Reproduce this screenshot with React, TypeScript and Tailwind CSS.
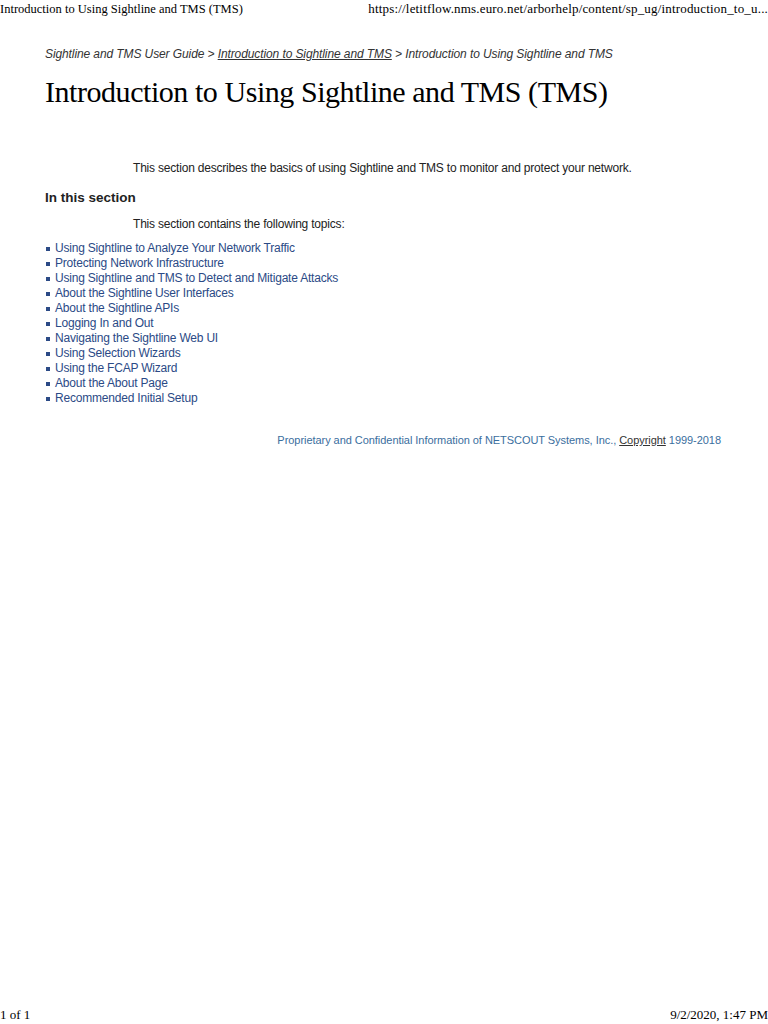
const TOPICS = [
  "Using Sightline to Analyze Your Network Traffic",
  "Protecting Network Infrastructure",
  "Using Sightline and TMS to Detect and Mitigate Attacks",
  "About the Sightline User Interfaces",
  "About the Sightline APIs",
  "Logging In and Out",
  "Navigating the Sightline Web UI",
  "Using Selection Wizards",
  "Using the FCAP Wizard",
  "About the About Page",
  "Recommended Initial Setup"
];

const serif = "font-['Liberation_Serif',serif]";
const sans = "font-['Liberation_Sans',Arial,sans-serif]";

export default function App() {
  return (
    <div className="flex min-h-[1024px] w-[768px] flex-col bg-white text-black">
      <div className={`flex items-start justify-between pt-[1px] leading-[16px] ${serif}`}>
        <span className="text-[12.5px]">Introduction to Using Sightline and TMS (TMS)</span>
        <span className="text-[13px] tracking-[0.18px]">
          https://letitflow.nms.euro.net/arborhelp/content/sp_ug/introduction_to_u...
        </span>
      </div>

      <div className={`flex flex-1 flex-col pl-[45px] pr-[47px] ${sans}`}>
        <p className="mt-[29px] text-[12px] italic leading-[16px] tracking-[-0.1px] text-[#333]">
          Sightline and TMS User Guide &gt; <span className="underline">Introduction to Sightline and TMS</span> &gt;
          Introduction to Using Sightline and TMS
        </p>
        <h1 className={`mt-[10px] text-[30px] leading-[40px] tracking-[-0.45px] ${serif}`}>
          Introduction to Using Sightline and TMS (TMS)
        </h1>

        <p className="mt-[48px] pl-[88px] text-[12px] leading-[16px] tracking-[-0.2px] text-[#222]">
          This section describes the basics of using Sightline and TMS to monitor and protect your network.
        </p>
        <h2 className="mt-[14px] text-[13.5px] font-bold leading-[16px] text-[#222]">In this section</h2>
        <p className="mt-[10px] pl-[88px] text-[12px] leading-[16px] tracking-[-0.2px] text-[#222]">
          This section contains the following topics:
        </p>

        <ul className="mt-[9px] flex flex-col text-[12px] leading-[15px] tracking-[-0.2px] text-[#2b4a86]">
          {TOPICS.map((t) => (
            <li key={t} className="flex items-center gap-[5px] pl-[1px]">
              <span className="h-[4px] w-[4px] bg-[#2b4a86]" />
              {t}
            </li>
          ))}
        </ul>

        <p className="mt-[27px] text-right text-[11px] leading-[14px] tracking-[-0.05px] text-[#3a6e9e]">
          Proprietary and Confidential Information of NETSCOUT Systems, Inc.,{" "}
          <span className="text-[#333] underline">Copyright</span> 1999-2018
        </p>
      </div>

      <div className={`flex items-end justify-between pb-[1px] text-[13px] leading-[16px] ${serif}`}>
        <span>1 of 1</span>
        <span>9/2/2020, 1:47 PM</span>
      </div>
    </div>
  );
}
